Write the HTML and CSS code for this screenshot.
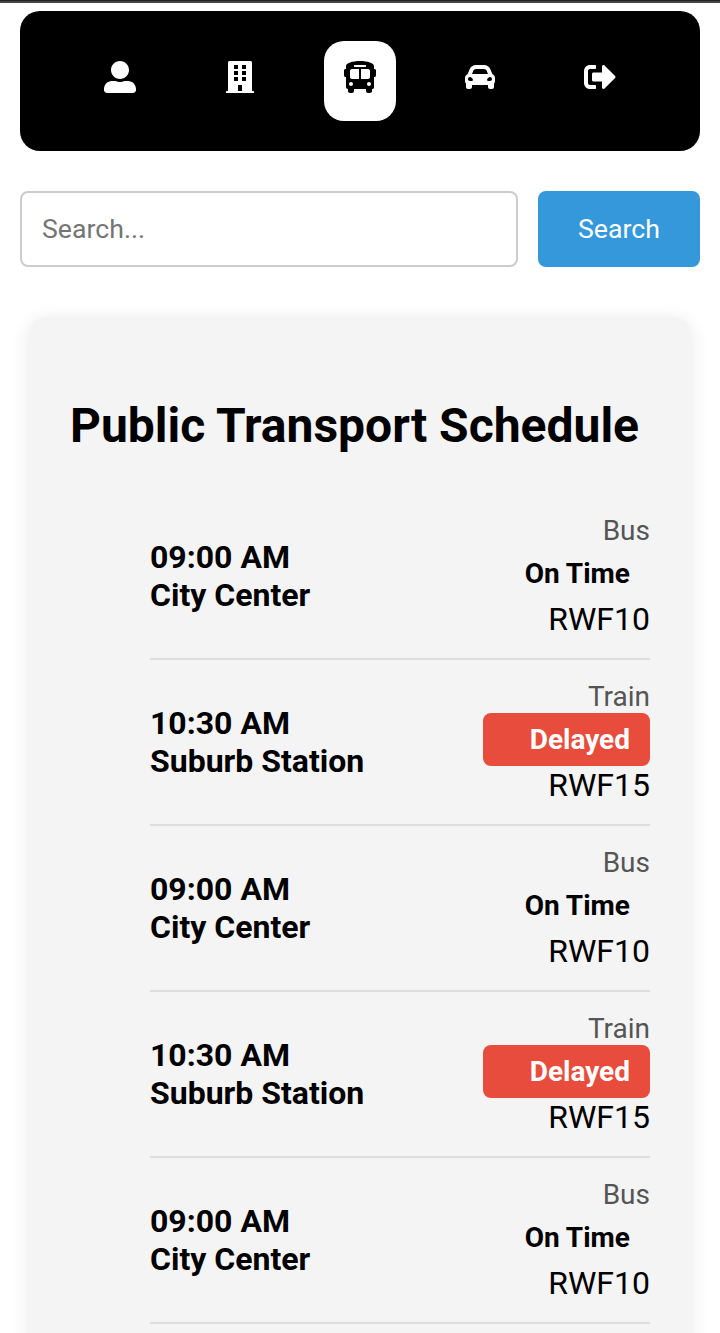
FILE: index.html
```html
<!DOCTYPE html>
<html lang="en">
<head>
    <meta charset="UTF-8">
    <meta name="viewport" content="width=device-width, initial-scale=1.0">
    <title>Public Transport</title>
    <link rel="stylesheet" href="styles.css">
</head>
<body>
    <!-- Navigation -->
    <nav class="navbar">
        <a href="#" class="nav-item">
            <svg viewBox="0 0 512 512" width="32" height="32"><path d="M256 288c79.5 0 144-64.5 144-144S335.5 0 256 0 112 64.500 112 144s64.500 144 144 144zm128 32h-55.100c-22.200 10.200-46.900 16-72.900 16s-50.600-5.800-72.900-16H128C57.300 320 0 377.300 0 448v16c0 26.500 21.500 48 48 48h416c26.500 0 48-21.500 48-48v-16c0-70.700-57.300-128-128-128z"/></svg>
        </a>
        <a href="#" class="nav-item">
            <svg viewBox="0 0 448 512" width="28" height="32"><path fill-rule="evenodd" d="M436 480h-20V24c0-13.300-10.700-24-24-24H56C42.700 0 32 10.700 32 24v456H12c-6.600 0-12 5.400-12 12v20h448v-20c0-6.600-5.400-12-12-12zM128 64h64v64h-64zM256 64h64v64h-64zM128 160h64v64h-64zM256 160h64v64h-64zM128 256h64v64h-64zM256 256h64v64h-64zM192 384h64v96h-64z"/></svg>
        </a>
        <a href="#" class="nav-item active">
            <svg viewBox="0 0 512 512" width="32" height="32"><path d="M488 128h-8V80c0-44.800-99.200-80-224-80S32 35.200 32 80v48h-8c-13.250 0-24 10.740-24 24v80c0 13.250 10.750 24 24 24h8v160c0 17.670 14.330 32 32 32v32c0 17.670 14.330 32 32 32h32c17.670 0 32-14.330 32-32v-32h192v32c0 17.670 14.330 32 32 32h32c17.670 0 32-14.330 32-32v-32h6.400c16 0 25.600-12.800 25.600-25.600V256h8c13.250 0 24-10.750 24-24v-80c0-13.260-10.750-24-24-24zM160 72c0-4.420 3.580-8 8-8h176c4.420 0 8 3.580 8 8v16c0 4.420-3.580 8-8 8H168c-4.420 0-8-3.580-8-8V72zm-48 328c-17.670 0-32-14.330-32-32s14.330-32 32-32 32 14.330 32 32-14.330 32-32 32zm128-112H128c-17.670 0-32-14.330-32-32v-96c0-17.670 14.330-32 32-32h112v160zm32 0V128h112c17.670 0 32 14.330 32 32v96c0 17.670-14.330 32-32 32H272zm128 112c-17.670 0-32-14.330-32-32s14.330-32 32-32 32 14.330 32 32-14.330 32-32 32z"/></svg>
        </a>
        <a href="#" class="nav-item">
            <svg viewBox="0 0 480 512" width="30" height="32"><path d="M438.660 212.330l-11.240-28.100-19.930-49.830C390.380 91.630 349.570 64 303.500 64h-127c-46.060 0-86.880 27.630-103.990 70.400l-19.930 49.830-11.240 28.100C17.220 221.500 0 244.660 0 272v48c0 16.120 6.160 30.670 16 41.930V416c0 17.670 14.330 32 32 32h32c17.670 0 32-14.330 32-32v-32h256v32c0 17.670 14.330 32 32 32h32c17.670 0 32-14.330 32-32v-54.070c9.840-11.250 16-25.800 16-41.930v-48c0-27.340-17.220-50.500-41.340-59.670zm-306.730-54.160c7.290-18.220 24.940-30.170 44.570-30.170h127c19.630 0 37.280 11.950 44.570 30.170L368 208H112l19.930-49.830zM80 319.800c-19.200 0-32-12.760-32-31.900S60.800 256 80 256s48 28.710 48 47.850-28.800 15.950-48 15.950zm320 0c-19.200 0-48 3.190-48-15.950S380.800 256 400 256s32 12.760 32 31.900-12.800 31.900-32 31.900z"/></svg>
        </a>
        <a href="#" class="nav-item">
            <svg viewBox="0 0 512 512" width="32" height="32"><path d="M497 273L329 441c-15 15-41 4.500-41-17v-96H152c-13.300 0-24-10.700-24-24v-96c0-13.300 10.700-24 24-24h136V88c0-21.400 25.900-32 41-17l168 168c9.300 9.400 9.300 24.600 0 34zM192 436v-40c0-6.600-5.400-12-12-12H96c-17.700 0-32-14.300-32-32V160c0-17.700 14.300-32 32-32h84c6.600 0 12-5.400 12-12V76c0-6.600-5.400-12-12-12H96c-53 0-96 43-96 96v192c0 53 43 96 96 96h84c6.600 0 12-5.400 12-12z"/></svg>
        </a>
    </nav>

    <!-- Search -->
    <form class="search-bar">
        <input type="text" name="query" placeholder="Search...">
        <button type="submit">Search</button>
    </form>

    <!-- Schedule -->
    <div class="schedule">
        <h2>Public Transport Schedule</h2>
        <ul>
            <li>
                <div class="trip">
                    <div>09:00 AM</div>
                    <div>City Center</div>
                </div>
                <div class="details">
                    <div class="type">Bus</div>
                    <div class="status">On Time</div>
                    <div class="price">RWF10</div>
                </div>
            </li>
            <li>
                <div class="trip">
                    <div>10:30 AM</div>
                    <div>Suburb Station</div>
                </div>
                <div class="details">
                    <div class="type">Train</div>
                    <div class="status delayed">Delayed</div>
                    <div class="price">RWF15</div>
                </div>
            </li>
            <li>
                <div class="trip">
                    <div>09:00 AM</div>
                    <div>City Center</div>
                </div>
                <div class="details">
                    <div class="type">Bus</div>
                    <div class="status">On Time</div>
                    <div class="price">RWF10</div>
                </div>
            </li>
            <li>
                <div class="trip">
                    <div>10:30 AM</div>
                    <div>Suburb Station</div>
                </div>
                <div class="details">
                    <div class="type">Train</div>
                    <div class="status delayed">Delayed</div>
                    <div class="price">RWF15</div>
                </div>
            </li>
            <li>
                <div class="trip">
                    <div>09:00 AM</div>
                    <div>City Center</div>
                </div>
                <div class="details">
                    <div class="type">Bus</div>
                    <div class="status">On Time</div>
                    <div class="price">RWF10</div>
                </div>
            </li>
        </ul>
    </div>
</body>
</html>
```
FILE: styles.css
```css
* {
    box-sizing: border-box;
}

body {
    font-family: Roboto, sans-serif;
    font-size: 32px;
    line-height: 38px;
    height: 1333px;
    margin: 0;
    padding: 10px 20px 0;
    border-top: 1px solid #222;
    box-shadow: inset 0 2px #444;
    overflow: hidden;
    color: #000;
    background-color: #fff;
}

/* Navigation */
.navbar {
    display: flex;
    justify-content: space-around;
    height: 140px;
    padding: 30px 40px;
    border-radius: 20px;
    background-color: #000;
}

.nav-item {
    display: flex;
    justify-content: center;
    width: 72px;
    height: 80px;
    padding-top: 20px;
    border-radius: 20px;
    color: #fff;
}

.nav-item svg {
    fill: currentColor;
}

.nav-item.active {
    background-color: #fff;
    color: #000;
}

/* Search */
.search-bar {
    display: flex;
    gap: 20px;
    height: 76px;
    margin: 40px 0 50px;
}

.search-bar input {
    flex: 1;
    min-width: 0;
    padding: 0 20px;
    border: 2px solid #ccc;
    border-radius: 8px;
    background-color: #fff;
    font-family: inherit;
    font-size: 26.667px;
}

.search-bar input::placeholder {
    color: #757575;
}

.search-bar button {
    width: 162px;
    padding: 0;
    border: none;
    border-radius: 8px;
    background-color: #3498db;
    color: #fff;
    font-family: inherit;
    font-size: 26.667px;
}

/* Schedule */
.schedule {
    margin: 0 10px;
    padding: 40px;
    border-radius: 16px;
    background-color: #f4f4f4;
    box-shadow: 0 4px 20px rgba(0, 0, 0, 0.1);
}

.schedule h2 {
    margin: 40px 0;
    font-size: 48px;
    line-height: 57px;
    white-space: nowrap;
}

.schedule ul {
    margin: 0;
    padding: 0 0 0 80px;
    list-style: none;
}

.schedule li {
    display: flex;
    justify-content: space-between;
    align-items: center;
    padding: 20px 0;
    border-bottom: 2px solid #ddd;
}

.trip {
    font-weight: bold;
}

.details {
    text-align: right;
}

.type {
    color: #555;
    font-size: 28px;
    line-height: 33px;
}

.status {
    width: 167px;
    padding: 10px 20px;
    border-radius: 8px;
    font-size: 28px;
    font-weight: bold;
    line-height: 33px;
}

.delayed {
    background-color: #e74c3c;
    color: #fff;
}
```
